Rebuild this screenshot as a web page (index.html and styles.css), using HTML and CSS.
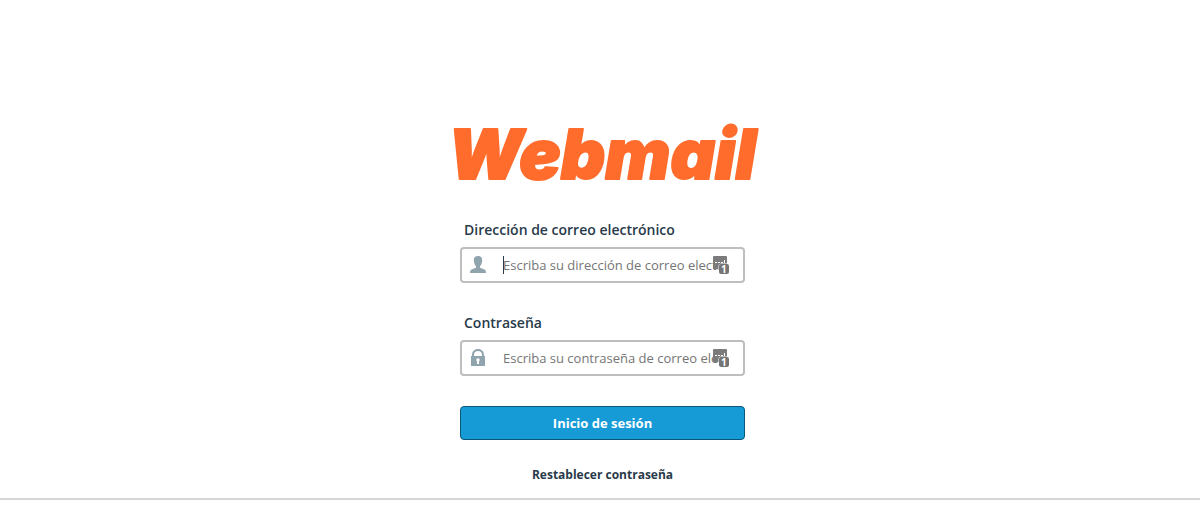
FILE: index.html
```html
<!DOCTYPE html>
<html lang="es">
<head>
    <meta charset="UTF-8">
    <meta name="viewport" content="width=device-width, initial-scale=1.0">
    <title>Webmail</title>
    <link rel="stylesheet" href="styles.css">
</head>
<body>
    <main class="login">
        <svg class="logo" viewBox="0 0 305 56" role="img" aria-label="Webmail">
            <text class="logo-text" x="-5" y="53">Webmail</text>
        </svg>

        <form class="login-form">
            <label class="field-label" for="user">Dirección de correo electrónico</label>
            <div class="field">
                <svg class="field-icon" viewBox="0 0 16 18">
                    <path d="M8 0C5.400 0 3.800 1.500 3.800 4c0 1 .1 1.600.3 2.200C4.400 8.200 5 9.200 6 10v1.800L2 13.300C.6 13.900 0 14.800 0 17h16c0-2.200-.6-3.100-2-3.700L10 11.800V10c1-.8 1.600-1.800 1.900-3.800.2-.6.3-1.200.3-2.200C12.200 1.500 10.600 0 8 0z"/>
                </svg>
                <input class="field-input with-caret" type="text" id="user" name="user" placeholder="Escriba su dirección de correo electrónico.">
                <svg class="key-icon" viewBox="0 0 18 18">
                    <rect class="key-box" x="0" y="0" width="14" height="13" rx="1"/>
                    <path class="key-dots" d="M2 6h2v1H2zM5 6h2v1H5zM8 6h2v1H8zM11 4h1v3h-1z"/>
                    <rect class="key-badge" x="6" y="8" width="10" height="10" rx="2"/>
                    <text class="key-count" x="8" y="17">1</text>
                </svg>
            </div>

            <label class="field-label" for="pass">Contraseña</label>
            <div class="field">
                <svg class="field-icon" viewBox="0 0 16 18">
                    <path fill-rule="evenodd" d="M1 7h1V6C2 2.500 4.500 0 8 0s6 2.500 6 6v1h1v10H1zM4 7h8V6c0-2.500-1.700-4-4-4S4 3.500 4 6zM8 9.200a1.700 1.700 0 0 0-1 3.100V15h2v-2.700a1.700 1.700 0 0 0-1-3.100z"/>
                </svg>
                <input class="field-input" type="password" id="pass" name="pass" placeholder="Escriba su contraseña de correo electrónico.">
                <svg class="key-icon" viewBox="0 0 18 18">
                    <rect class="key-box" x="0" y="0" width="14" height="13" rx="1"/>
                    <path class="key-dots" d="M2 6h2v1H2zM5 6h2v1H5zM8 6h2v1H8zM11 4h1v3h-1z"/>
                    <rect class="key-badge" x="6" y="8" width="10" height="10" rx="2"/>
                    <text class="key-count" x="8" y="17">1</text>
                </svg>
            </div>

            <button class="login-button" type="submit">Inicio de sesión</button>
            <a class="reset-link" href="#">Restablecer contraseña</a>
        </form>
    </main>
    <footer class="footer"></footer>
</body>
</html>
```

FILE: styles.css
```css
* {
    box-sizing: border-box;
}

body {
    margin: 0;
    background-color: #ffffff;
    color: #293a4a;
    font-family: "Open Sans", "Noto Sans", sans-serif;
    font-size: 14px;
}

.login {
    display: flex;
    flex-direction: column;
    align-items: center;
    padding: 126px 0 13px 5px;
}

.logo {
    display: block;
    width: 311px;
    height: 56px;
    padding-left: 6px;
    overflow: visible;
}

.logo-text {
    font-family: Inter, sans-serif;
    font-size: 69px;
    font-weight: 900;
    font-style: italic;
    fill: #ff6c2c;
    stroke: #ff6c2c;
    stroke-width: 2px;
    stroke-linejoin: round;
}

.login-form {
    display: flex;
    flex-direction: column;
    width: 100%;
    max-width: 285px;
    padding-top: 38px;
}

.field-label {
    padding-left: 4px;
    line-height: 20px;
    margin-bottom: 7px;
    font-weight: 600;
}

.field {
    position: relative;
    display: flex;
    margin-bottom: 30px;
}

.field-icon {
    position: absolute;
    left: 10px;
    top: 9px;
    width: 16px;
    height: 18px;
    fill: #90a4ae;
}

.key-icon {
    position: absolute;
    right: 14px;
    top: 9px;
    width: 18px;
    height: 18px;
    overflow: visible;
    pointer-events: none;
}

.key-box {
    fill: #7b7b7b;
}

.key-dots {
    fill: #ffffff;
}

.key-badge {
    fill: #757575;
    stroke: #ffffff;
    stroke-width: 1px;
    paint-order: stroke;
}

.key-count {
    fill: #ffffff;
    font-size: 10px;
    font-weight: 700;
}

.field-input {
    width: 100%;
    height: 36px;
    padding: 0 16px 0 41px;
    border: 2px solid #bebebe;
    border-radius: 4px;
    background-color: transparent;
    font-family: inherit;
    font-size: 13px;
    color: #293a4a;
}

.field-input::placeholder {
    color: #757575;
}

.with-caret {
    background-image: linear-gradient(#293a4a, #293a4a);
    background-repeat: no-repeat;
    background-size: 1px 18px;
    background-position: 41px 7px;
}

.login-button {
    height: 34px;
    border: 1px solid #095779;
    border-radius: 4px;
    background-color: #179bd7;
    color: #ffffff;
    font-family: inherit;
    font-size: 13px;
    font-weight: 700;
    cursor: pointer;
}

.reset-link {
    align-self: center;
    margin-top: 25px;
    line-height: 20px;
    color: #293a4a;
    font-size: 12px;
    font-weight: 700;
    text-decoration: none;
}

.footer {
    border-top: 2px solid #d6d6d6;
}
```
